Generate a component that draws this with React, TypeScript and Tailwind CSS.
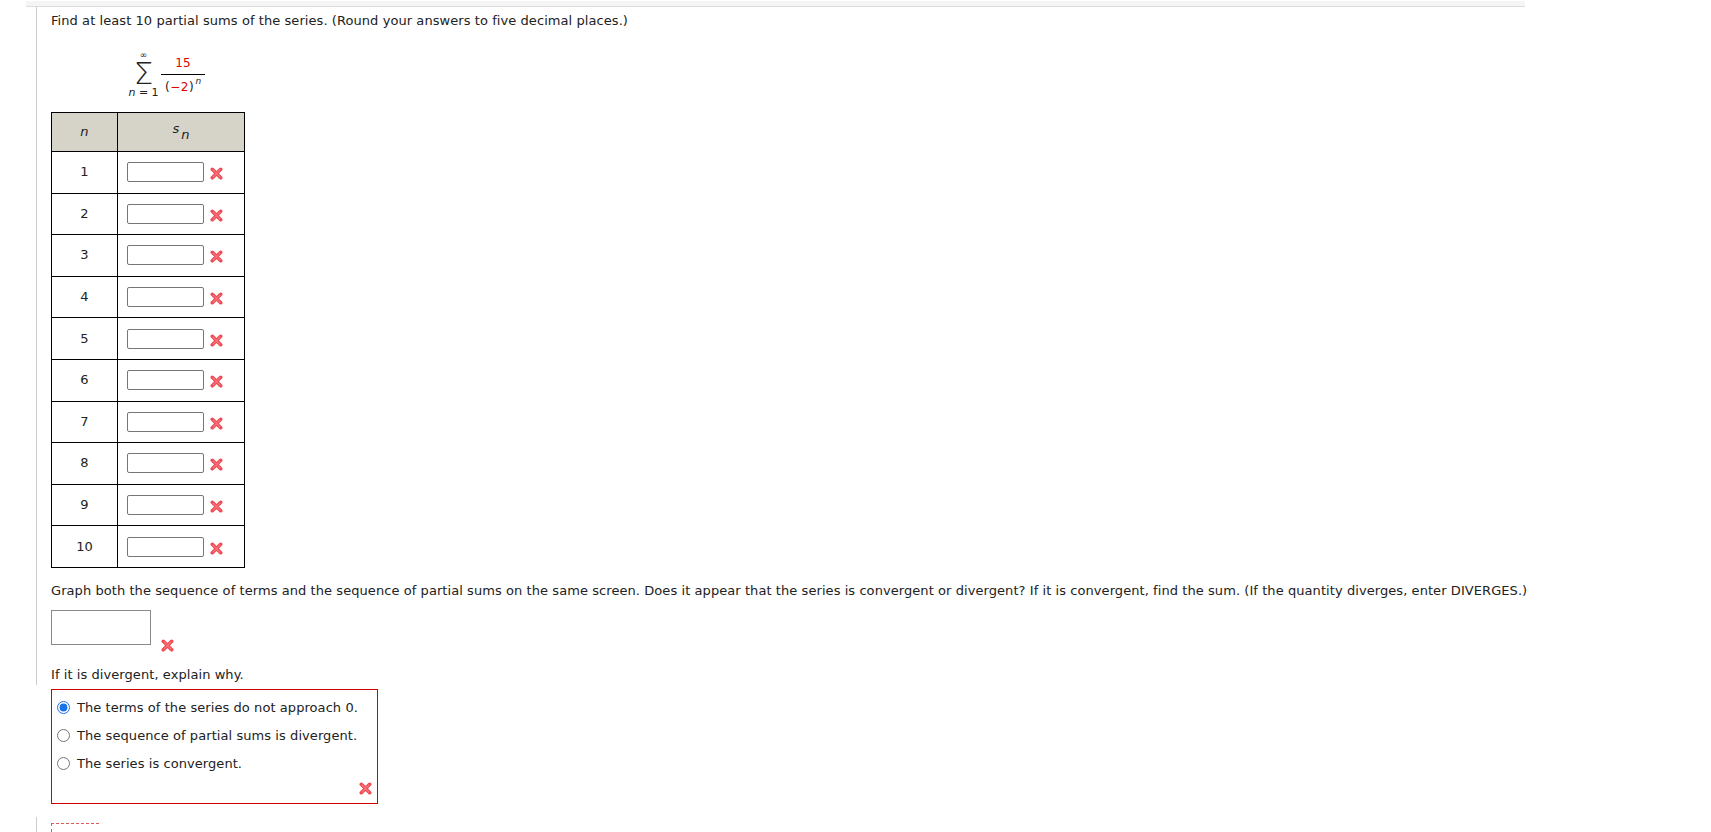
import React from "react";

const XMark: React.FC<{ className?: string }> = ({ className }) => (
  <svg className={className} width="13" height="13" viewBox="0 0 13 13">
    <path d="M2.3 2.3 L10.7 10.7 M10.7 2.3 L2.3 10.7" stroke="#ef4852" strokeWidth="3.6" strokeLinecap="round" />
    <path d="M3 3 L10 10 M10 3 L3 10" stroke="#f7757c" strokeWidth="1.2" strokeLinecap="round" />
  </svg>
);

const rows = [1, 2, 3, 4, 5, 6, 7, 8, 9, 10];

const options = [
  { label: "The terms of the series do not approach 0.", checked: true },
  { label: "The sequence of partial sums is divergent.", checked: false },
  { label: "The series is convergent.", checked: false },
];

export default function App() {
  return (
    <div className="min-h-[832px] w-full bg-white font-['DejaVu_Sans',Verdana,sans-serif] text-[13px] leading-4 tracking-[0.07px] text-[#222]">
      <div className="ml-[26px] mt-px h-[6px] w-[1499px] border-b border-[#dddddd] bg-[#f5f5f5]" />

      <div className="ml-[36px] border-l border-[#cccccc] pb-[2px] pl-[14px] pt-[6px]">
        <p>Find at least 10 partial sums of the series. (Round your answers to five decimal places.)</p>

        {/* formula */}
        <div className="ml-[78px] mt-[22px] flex items-start whitespace-nowrap tracking-normal">
          <div className="flex w-[29px] flex-col items-center">
            <span className="h-[9px] text-[9px] leading-[9px]">∞</span>
            <span className="h-[27px] text-[31px] font-extralight leading-[27px]">Σ</span>
            <span className="h-[11px] text-[11px] leading-[11px]">
              <i>n</i> = 1
            </span>
          </div>
          <div className="ml-[3px] mt-[5px] flex w-[44px] flex-col items-center">
            <span className="mb-[3px] text-[12px] leading-[15px] text-[#e00000]">15</span>
            <div className="h-px w-full bg-black" />
            <span className="mt-[5px] flex items-start text-[12px] leading-[15px]">
              <span className="tracking-[0.6px]">
                (<span className="text-[#e00000]">−2</span>)
              </span>
              <span className="-mt-[4px] ml-px text-[9px] italic leading-[10px]">n</span>
            </span>
          </div>
        </div>

        {/* table */}
        <table className="mt-[14px] border-collapse text-center">
          <thead>
            <tr className="h-[39px] bg-[#d6d3c9]">
              <th className="w-[66px] border border-black font-normal italic">n</th>
              <th className="w-[127px] border border-black font-normal italic">
                <span className="inline-flex items-start">
                  <span className="-mt-[3px]">s</span>
                  <span className="ml-[2px] mt-[3px]">n</span>
                </span>
              </th>
            </tr>
          </thead>
          <tbody>
            {rows.map((n) => (
              <tr key={n} className="h-[41.6px]">
                <td className="border border-black">{n}</td>
                <td className="border border-black">
                  <div className="flex items-center pl-[9px]">
                    <input
                      type="text"
                      className="h-[20px] w-[77px] rounded-[2px] border border-[#767676] bg-white"
                    />
                    <XMark className="ml-[6px] mt-[3px]" />
                  </div>
                </td>
              </tr>
            ))}
          </tbody>
        </table>

        <p className="mt-[15px]">
          Graph both the sequence of terms and the sequence of partial sums on the same screen. Does it appear that the
          series is convergent or divergent? If it is convergent, find the sum. (If the quantity diverges, enter
          DIVERGES.)
        </p>

        <div className="mt-[11px] flex items-end">
          <input type="text" className="h-[35px] w-[100px] border border-[#8a8a8a] bg-white" />
          <XMark className="-mb-[7px] ml-[10px]" />
        </div>

        <p className="mt-[22px]">If it is divergent, explain why.</p>
      </div>

      <div className="ml-[51px] mt-[4px] flex h-[115px] w-[327px] flex-col border border-[#d40000] pl-[5px] pt-[10px]">
        {options.map((o) => (
          <label key={o.label} className="mb-[12px] flex items-center">
            <input
              type="radio"
              name="why"
              defaultChecked={o.checked}
              className="m-0 h-[13px] w-[13px] accent-[#1a73e8]"
            />
            <span className="ml-[7px]">{o.label}</span>
          </label>
        ))}
        <div className="-mt-[2px] flex justify-end pr-[5px]">
          <XMark />
        </div>
      </div>

      <div className="ml-[36px] mt-[13px] h-[15px] border-l border-[#cccccc] pl-[14px] pt-[6px]">
        <div className="h-[9px] w-[48px] border-l border-t border-dashed border-[#e05a5a]" />
      </div>
    </div>
  );
}
